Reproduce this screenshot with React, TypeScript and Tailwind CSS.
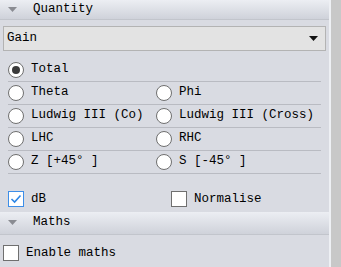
import React from "react";

const font = { fontFamily: '"Liberation Mono", "DejaVu Sans Mono", monospace' };

function Radio({ checked, label }: { checked?: boolean; label: string }) {
  return (
    <div className="flex items-center gap-[7px]">
      <span className="w-[16px] h-[16px] rounded-full border border-[#6f6f6f] bg-white flex items-center justify-center shrink-0">
        {checked && <span className="w-[8px] h-[8px] rounded-full bg-[#3a3a3a]" />}
      </span>
      <span className="text-[12.5px] text-black whitespace-nowrap">{label}</span>
    </div>
  );
}

function Check({ checked, label }: { checked?: boolean; label: string }) {
  return (
    <div className="flex items-center gap-[7px]">
      <span
        className={
          checked
            ? "w-[16px] h-[16px] border border-[#3d8ee8] bg-white flex items-center justify-center shrink-0"
            : "w-[16px] h-[16px] border border-[#6f6f6f] bg-white shrink-0"
        }
      >
        {checked && (
          <svg width="12" height="12" viewBox="0 0 12 12">
            <path d="M1.5 6 L4.6 9 L10.5 2.5" fill="none" stroke="#2d86e6" strokeWidth="1.6" />
          </svg>
        )}
      </span>
      <span className="text-[12.5px] text-black whitespace-nowrap">{label}</span>
    </div>
  );
}

function Header({ title, tall }: { title: string; tall?: boolean }) {
  return (
    <div
      className={
        (tall ? "h-[23px] " : "h-[21px] ") +
        "flex items-center bg-gradient-to-b from-[#eceef3] to-[#cfd2da] border-b border-[#c2c5cc]"
      }
    >
      <svg width="9" height="5" viewBox="0 0 9 5" className="ml-[8px]">
        <path d="M0 0 L9 0 L4.5 5 Z" fill="#8a8c92" />
      </svg>
      <span className="ml-[16px] text-[12.5px] text-black">{title}</span>
    </div>
  );
}

export default function App() {
  const pairs: [string, string][] = [
    ["Theta", "Phi"],
    ["Ludwig III (Co)", "Ludwig III (Cross)"],
    ["LHC", "RHC"],
    ["Z [+45° ]", "S [-45° ]"],
  ];
  return (
    <div className="w-[341px] h-[267px] flex bg-[#d9dbe2] overflow-hidden" style={font}>
      <div className="w-[329px] flex flex-col">
        <Header title="Quantity" />
        <div className="px-[3px] pt-[6px]">
          <div className="h-[25px] border border-[#b3b3b3] bg-[#e3e3e3] flex items-center justify-between px-[3px]">
            <span className="text-[12.5px] text-black">Gain</span>
            <svg width="9" height="5" viewBox="0 0 9 5" className="mr-[4px]">
              <path d="M0 0 L9 0 L4.5 5 Z" fill="#111" />
            </svg>
          </div>
        </div>
        <div className="pt-[8px]">
          <div className="h-[23px] flex items-center border-b border-[#b9bbc2] mx-[8px]">
            <Radio checked label="Total" />
          </div>
          {pairs.map(([a, b]) => (
            <div key={a} className="grid grid-cols-[148px_1fr] h-[23px] mx-[8px] border-b border-[#b9bbc2]">
              <div className="flex items-center">
                <Radio label={a} />
              </div>
              <div className="flex items-center">
                <Radio label={b} />
              </div>
            </div>
          ))}
          <div className="grid grid-cols-[163px_1fr] h-[36px] mx-[8px] items-end pb-[1px]">
            <Check checked label="dB" />
            <Check label="Normalise" />
          </div>
        </div>
        <div className="mt-[2px]">
          <Header title="Maths" tall />
        </div>
        <div className="px-[3px] pt-[9px] pb-[5px] border-b border-[#c9cbd1]">
          <Check label="Enable maths" />
        </div>
      </div>
      <div className="w-[2px] bg-[#eef0f4]" />
      <div className="flex-1 bg-[#c8c8c8]" />
    </div>
  );
}
